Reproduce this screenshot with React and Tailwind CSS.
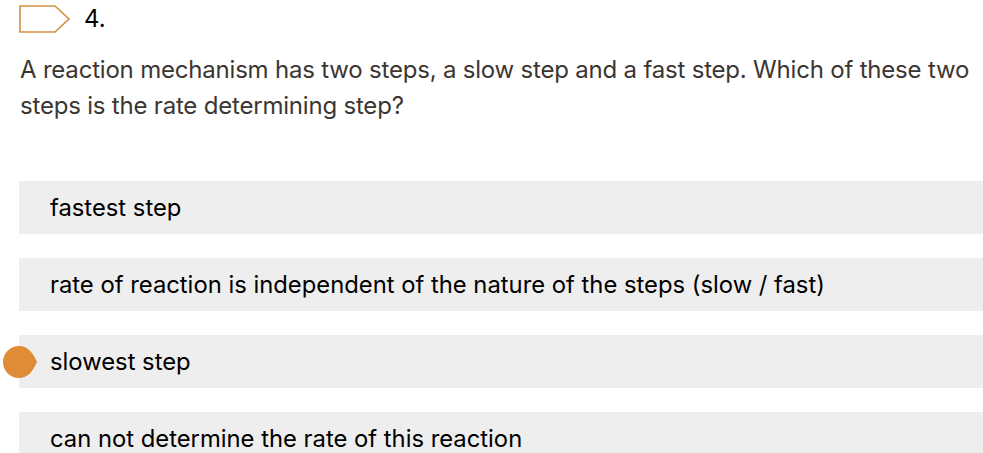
import React from 'react';

const options = [
  { text: 'fastest step', selected: false },
  { text: 'rate of reaction is independent of the nature of the steps (slow / fast)', selected: false },
  { text: 'slowest step', selected: true },
  { text: 'can not determine the rate of this reaction', selected: false },
];

const Marker = () => (
  <svg width="36" height="34" viewBox="0 0 36 34" className="absolute left-[2px] top-1/2 -translate-y-1/2">
    <path d="M17 1 C26 1 31 8 35 17 C31 26 26 33 17 33 C8 33 1 26 1 17 C1 8 8 1 17 1 Z" fill="#e08b35" />
  </svg>
);

const App = () => {
  return (
    <div className="w-[983px] h-[453px] overflow-hidden bg-white font-['Inter',sans-serif]">
      {/* Question header */}
      <div className="flex items-center h-[37px] pl-[19px] pt-[1px]">
        <svg width="52" height="28" viewBox="0 0 52 28" className="shrink-0">
          <path d="M1 1 H36 L50 14 L36 27 H1 Z" fill="none" stroke="#d48f3f" strokeWidth="1.6" />
        </svg>
        <span className="ml-[13px] text-[24px] text-black leading-none">4.</span>
      </div>

      <p className="mt-[15px] pl-[20px] text-[24px] leading-[36px] tracking-[-0.2px] text-[#3b3632]">
        A reaction mechanism has two steps, a slow step and a fast step. Which of these two steps is the rate determining step?
      </p>

      {/* Options */}
      <div className="mt-[57px] flex flex-col gap-[24px]">
        {options.map((o) => (
          <div key={o.text} className="relative pl-[19px]">
            {o.selected && <Marker />}
            <div className="h-[53px] bg-[#eeeeee] flex items-center pl-[31px] text-[23.8px] text-black">
              {o.text}
            </div>
          </div>
        ))}
      </div>
    </div>
  );
};

export default App;
